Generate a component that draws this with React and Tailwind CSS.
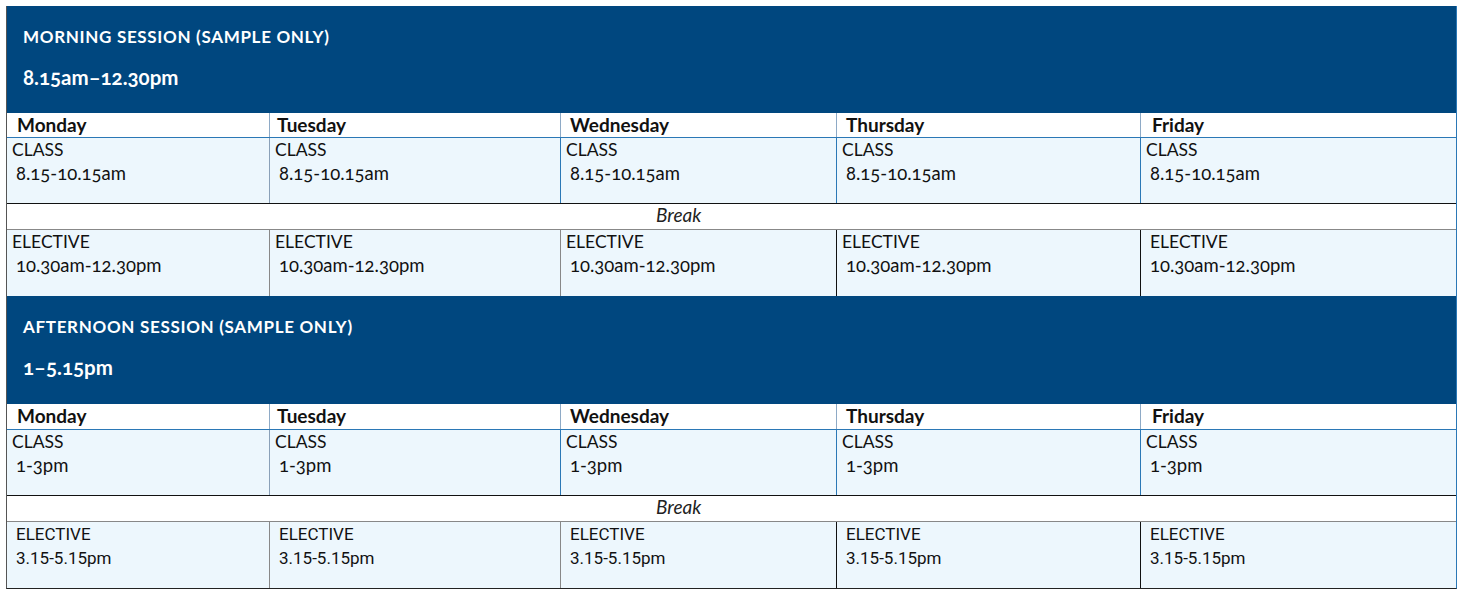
import React from 'react';

const days = ['Monday', 'Tuesday', 'Wednesday', 'Thursday', 'Friday'];

const cols = 'grid grid-cols-[263px_291px_276px_304px_316px]';

// left padding of the day names, per column
const dayPad = ['pl-[10px]', 'pl-[7px]', 'pl-[9px]', 'pl-[9px]', 'pl-[11px]'];
const vline = ['border-r', 'border-r', 'border-r', 'border-r', ''];

const sessions = [
  {
    title: 'Morning session (sample only)',
    hours: '8.15am–12.30pm',
    classTime: '8.15-10.15am',
    electiveTime: '10.30am-12.30pm',
  },
  {
    title: 'Afternoon session (sample only)',
    hours: '1–5.15pm',
    classTime: '1-3pm',
    electiveTime: '3.15-5.15pm',
  },
];

const Session = ({ s, last }) => (
  <div>
    {/* Session header */}
    <div className={`bg-[#00477f] text-white ${last ? 'h-[108px]' : 'h-[107px]'} pl-[16px] pt-[20px]`}>
      <h2 className="text-[17px] font-bold uppercase tracking-[0.04em] leading-[22px]">{s.title}</h2>
      <p className="text-[20.5px] font-bold leading-[26px] mt-[16px] oldstyle-nums">{s.hours}</p>
    </div>

    {/* Day names */}
    <div className={`${cols} bg-white border-b border-[#2b78b6] ${last ? 'h-[26px]' : 'h-[25px]'}`}>
      {days.map((d, i) => (
        <div key={d} className={`${vline[i]} border-[#8eaac6] ${dayPad[i]} text-[19px] font-bold text-[#111] leading-[23px]`}>
          {d}
        </div>
      ))}
    </div>

    {/* Class row */}
    <div className={`${cols} bg-[#edf7fd] h-[65px]`}>
      {days.map((d, i) => (
        <div key={d} className={`${vline[i]} ${i >= 1 ? 'border-[#2b78b6]' : 'border-[#8aa0b8]'} pl-[5px] pt-[2px] text-[17.5px] text-[#111] leading-[20px]`}>
          <div>CLASS</div>
          <div className="pl-[4px] mt-[3px] text-[18.5px] oldstyle-nums">{s.classTime}</div>
        </div>
      ))}
    </div>

    {/* Break */}
    <div className="bg-white border-t border-[#111] border-b border-b-[#888] h-[27px] pl-[649px] text-[19px] italic text-[#222] leading-[21px]">
      Break
    </div>

    {/* Elective row */}
    <div className={`${cols} bg-[#edf7fd] h-[66px]`}>
      {days.map((d, i) =>
        last ? (
          <div key={d} className={`${vline[i]} ${i >= 2 ? 'border-[#111]' : 'border-[#888]'} pl-[9px] pt-[2px] font-['Roboto',sans-serif] text-[17px] text-[#111] leading-[20px]`}>
            <div>ELECTIVE</div>
            <div className="mt-[4px]">{s.electiveTime}</div>
          </div>
        ) : (
          <div key={d} className={`${vline[i]} ${i >= 2 ? 'border-[#111]' : 'border-[#888]'} ${i === 4 ? 'pl-[9px]' : 'pl-[5px]'} pt-[2px] text-[17.5px] text-[#111] leading-[20px]`}>
            <div>ELECTIVE</div>
            <div className={`${i === 4 ? '' : 'pl-[4px]'} mt-[3px] text-[18.5px] oldstyle-nums`}>{s.electiveTime}</div>
          </div>
        )
      )}
    </div>
  </div>
);

export default function App() {
  return (
    <div className="bg-white w-[1460px] h-[592px] pt-[6px] pl-[6px] font-['Lato','Noto_Sans',sans-serif]">
      <div className="w-[1451px] border-l border-[#555] border-r border-r-[#2b78b6] border-b border-b-[#222]">
        {sessions.map((s, i) => (
          <Session key={i} s={s} last={i === sessions.length - 1} />
        ))}
      </div>
    </div>
  );
}
